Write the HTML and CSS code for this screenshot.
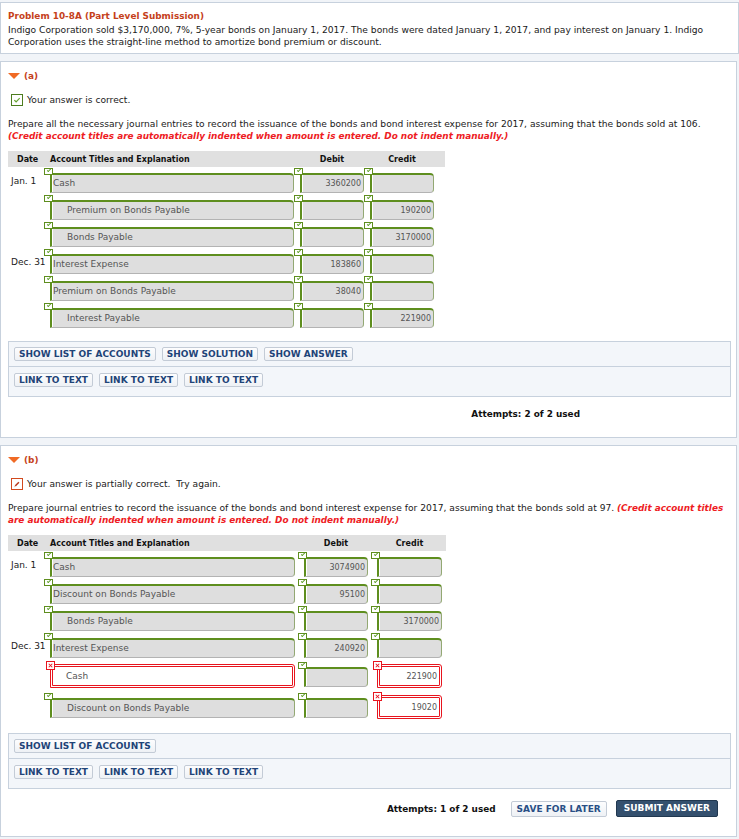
FILE: index.html
```html
<!DOCTYPE html>
<html>
<head>
  <title>Problem 10-8A (Part Level Submission)</title>
  <link rel="stylesheet" href="styles.css">
</head>
<body>
  <div class="intro">
    <div class="prob-title">Problem 10-8A (Part Level Submission)</div>
    <p>Indigo Corporation sold $3,170,000, 7%, 5-year bonds on January 1, 2017. The bonds were dated January 1, 2017, and pay interest on January 1. Indigo Corporation uses the straight-line method to amortize bond premium or discount.</p>
  </div>

  <!-- part (a) -->
  <div class="part">
    <div class="part-head"><span class="arrow"></span>(a)</div>
    <div class="status">
      <svg class="status-icon" width="12" height="12" viewBox="0 0 12 12"><rect x="0.5" y="0.5" width="11" height="11" fill="#fff" stroke="#4d7d1f"/><path d="M3.3 6.1 L5.1 7.8 L8.7 4.2" fill="none" stroke="#64a22e" stroke-width="1.2"/></svg>
      Your answer is correct.
    </div>
    <p class="q">Prepare all the necessary journal entries to record the issuance of the bonds and bond interest expense for 2017, assuming that the bonds sold at 106. <span class="warn">(Credit account titles are automatically indented when amount is entered. Do not indent manually.)</span></p>

    <div class="journal">
      <div class="jhead">
        <div class="c-date">Date</div>
        <div class="c-acct">Account Titles and Explanation</div>
        <div class="c-amt">Debit</div>
        <div class="c-amt">Credit</div>
      </div>
      <div class="jrow">
        <div class="c-date">Jan. 1</div>
        <div class="cell c-acct"><i class="mark"></i><div class="fld">Cash</div></div>
        <div class="cell c-amt"><i class="mark"></i><div class="fld num">3360200</div></div>
        <div class="cell c-amt"><i class="mark"></i><div class="fld num"></div></div>
      </div>
      <div class="jrow">
        <div class="c-date"></div>
        <div class="cell c-acct"><i class="mark"></i><div class="fld ind">Premium on Bonds Payable</div></div>
        <div class="cell c-amt"><i class="mark"></i><div class="fld num"></div></div>
        <div class="cell c-amt"><i class="mark"></i><div class="fld num">190200</div></div>
      </div>
      <div class="jrow">
        <div class="c-date"></div>
        <div class="cell c-acct"><i class="mark"></i><div class="fld ind">Bonds Payable</div></div>
        <div class="cell c-amt"><i class="mark"></i><div class="fld num"></div></div>
        <div class="cell c-amt"><i class="mark"></i><div class="fld num">3170000</div></div>
      </div>
      <div class="jrow">
        <div class="c-date">Dec. 31</div>
        <div class="cell c-acct"><i class="mark"></i><div class="fld">Interest Expense</div></div>
        <div class="cell c-amt"><i class="mark"></i><div class="fld num">183860</div></div>
        <div class="cell c-amt"><i class="mark"></i><div class="fld num"></div></div>
      </div>
      <div class="jrow">
        <div class="c-date"></div>
        <div class="cell c-acct"><i class="mark"></i><div class="fld">Premium on Bonds Payable</div></div>
        <div class="cell c-amt"><i class="mark"></i><div class="fld num">38040</div></div>
        <div class="cell c-amt"><i class="mark"></i><div class="fld num"></div></div>
      </div>
      <div class="jrow">
        <div class="c-date"></div>
        <div class="cell c-acct"><i class="mark"></i><div class="fld ind">Interest Payable</div></div>
        <div class="cell c-amt"><i class="mark"></i><div class="fld num"></div></div>
        <div class="cell c-amt"><i class="mark"></i><div class="fld num">221900</div></div>
      </div>
    </div>

    <div class="tools">
      <div class="tools-row">
        <button class="btn">Show List of Accounts</button>
        <button class="btn">Show Solution</button>
        <button class="btn">Show Answer</button>
      </div>
      <div class="tools-row links">
        <button class="btn">Link to Text</button>
        <button class="btn">Link to Text</button>
        <button class="btn">Link to Text</button>
      </div>
    </div>

    <div class="foot foot-done">
      <span class="attempts">Attempts: 2 of 2 used</span>
    </div>
  </div>

  <!-- part (b) -->
  <div class="part part-last">
    <div class="part-head"><span class="arrow"></span>(b)</div>
    <div class="status">
      <svg class="status-icon" width="12" height="12" viewBox="0 0 12 12"><rect x="0.5" y="0.5" width="11" height="11" fill="#fff" stroke="#d24a1e"/><path d="M4.2 8 L7.9 4.2" fill="none" stroke="#b8361a" stroke-width="1.5"/><path d="M3.4 8.7 L4.2 8" stroke="#e9a088" stroke-width="1"/></svg>
      Your answer is partially correct.&nbsp; Try again.
    </div>
    <p class="q">Prepare journal entries to record the issuance of the bonds and bond interest expense for 2017, assuming that the bonds sold at 97. <span class="warn">(Credit account titles are automatically indented when amount is entered. Do not indent manually.)</span></p>

    <div class="journal wide">
      <div class="jhead">
        <div class="c-date">Date</div>
        <div class="c-acct">Account Titles and Explanation</div>
        <div class="c-amt">Debit</div>
        <div class="c-amt">Credit</div>
      </div>
      <div class="jrow">
        <div class="c-date">Jan. 1</div>
        <div class="cell c-acct"><i class="mark"></i><div class="fld">Cash</div></div>
        <div class="cell c-amt"><i class="mark"></i><div class="fld num">3074900</div></div>
        <div class="cell c-amt"><i class="mark"></i><div class="fld num"></div></div>
      </div>
      <div class="jrow">
        <div class="c-date"></div>
        <div class="cell c-acct"><i class="mark"></i><div class="fld">Discount on Bonds Payable</div></div>
        <div class="cell c-amt"><i class="mark"></i><div class="fld num">95100</div></div>
        <div class="cell c-amt"><i class="mark"></i><div class="fld num"></div></div>
      </div>
      <div class="jrow">
        <div class="c-date"></div>
        <div class="cell c-acct"><i class="mark"></i><div class="fld ind">Bonds Payable</div></div>
        <div class="cell c-amt"><i class="mark"></i><div class="fld num"></div></div>
        <div class="cell c-amt"><i class="mark"></i><div class="fld num">3170000</div></div>
      </div>
      <div class="jrow">
        <div class="c-date">Dec. 31</div>
        <div class="cell c-acct"><i class="mark"></i><div class="fld">Interest Expense</div></div>
        <div class="cell c-amt"><i class="mark"></i><div class="fld num">240920</div></div>
        <div class="cell c-amt"><i class="mark"></i><div class="fld num"></div></div>
      </div>
      <div class="jrow has-err">
        <div class="c-date"></div>
        <div class="cell bad c-acct"><i class="mark"></i><div class="fld ind">Cash</div></div>
        <div class="cell c-amt"><i class="mark"></i><div class="fld num"></div></div>
        <div class="cell bad c-amt"><i class="mark"></i><div class="fld num">221900</div></div>
      </div>
      <div class="jrow has-err">
        <div class="c-date"></div>
        <div class="cell c-acct"><i class="mark"></i><div class="fld ind">Discount on Bonds Payable</div></div>
        <div class="cell c-amt"><i class="mark"></i><div class="fld num"></div></div>
        <div class="cell bad c-amt"><i class="mark"></i><div class="fld num">19020</div></div>
      </div>
    </div>

    <div class="tools">
      <div class="tools-row">
        <button class="btn">Show List of Accounts</button>
      </div>
      <div class="tools-row links">
        <button class="btn">Link to Text</button>
        <button class="btn">Link to Text</button>
        <button class="btn">Link to Text</button>
      </div>
    </div>

    <div class="foot">
      <span class="attempts">Attempts: 1 of 2 used</span>
      <button class="btn save">Save for Later</button>
      <button class="btn submit">Submit Answer</button>
    </div>
  </div>
</body>
</html>
```

FILE: styles.css
```css
body { margin: 0; background: #f1f4f8; font-family: "DejaVu Sans", Verdana, sans-serif; font-size: 9.15px; line-height: 12px; color: #1a1a1a; }
p { margin: 0; }

.intro { margin-top: 2px; background: #fff; border: 1px solid #c7d1dd; padding: 7px 8px 5px 7px; }
.prob-title { font-size: 8.9px; font-weight: bold; color: #c5411b; margin-bottom: 2px; }

.part { width: 737px; box-sizing: border-box; margin-top: 7px; background: #fff; border: 1px solid #c7d1dd; padding: 8px 5px 17px 7px; }
.part-last { padding-bottom: 19px; }
.part-head { display: flex; align-items: center; gap: 4px; font-size: 8.9px; font-weight: bold; color: #c5411b; }
.arrow { width: 0; height: 0; border-left: 6px solid transparent; border-right: 6px solid transparent; border-top: 6px solid #f06a25; }

.status { display: flex; align-items: center; height: 12px; margin-top: 12px; }
.status-icon { margin: 0 4px 0 3px; flex: none; }
.q { margin-top: 12px; }
.warn { font-size: 8.9px; color: #ee1c24; font-weight: bold; font-style: italic; }

/* journal entry grid */
.journal { width: 437px; margin-top: 9px; font-size: 9px; }
.journal.wide { width: 438px; }
.jhead { display: flex; height: 16px; line-height: 16px; background: #e0e0e0; font-family: "DejaVu Sans Condensed", "DejaVu Sans", sans-serif; font-size: 8.9px; font-weight: bold; color: #111; }
.jrow { display: flex; align-items: center; padding: 1px 0; }
.jrow.has-err { padding: 2px 0; }

.c-date { width: 42px; flex: none; box-sizing: border-box; align-self: flex-start; padding: 7px 0 0 3px; }
.jhead .c-date { padding: 0 0 0 9px; }
.c-acct { width: 244px; flex: none; }
.c-amt { width: 64px; flex: none; margin-left: 6px; }
.jhead .c-amt { text-align: center; }
.wide .c-acct { width: 245px; }
.wide .c-amt { margin-left: 9px; }
.wide .c-amt:last-child { width: 65px; }

.cell { position: relative; padding-top: 5px; }
.fld { box-sizing: content-box; height: 17px; line-height: 17px; padding: 0 2px 0 1px; border-top: 2px solid #5e8e1e; border-left: 2px solid #5e8e1e; border-right: 1px solid #93a873; border-bottom: 1px solid #b3b3b3; border-radius: 0 4px 4px 0; background: #dedede; box-shadow: inset 1px 0 0 #fff; color: #555; white-space: nowrap; overflow: hidden; }
.fld.ind { padding-left: 15px; }
.fld.num { text-align: right; font-family: "DejaVu Sans Condensed", "DejaVu Sans", sans-serif; font-size: 8.9px; }

.mark { position: absolute; top: 0; left: -6px; width: 7px; height: 5px; border: 1px solid #5e8e1e; background: #fff; z-index: 1; }
.mark::after { content: ""; position: absolute; left: 2px; top: 0; width: 3px; height: 1px; border-left: 1px solid #5f9f2a; border-bottom: 1px solid #5f9f2a; transform: rotate(-45deg); }

.cell.bad { padding-top: 3px; }
.cell.bad .fld { height: 18px; line-height: 18px; border: 3px double #e8141e; border-radius: 0 3px 3px 0; background: #fff; box-shadow: none; }
.cell.bad .fld.ind { padding-left: 13px; }
.cell.bad .mark { left: -4px; height: 7px; border-color: #e8141e; }
.cell.bad .mark::before,
.cell.bad .mark::after { content: ""; position: absolute; left: 1px; top: 3px; width: 5px; height: 1px; border: 0; background: #e8141e; transform: rotate(45deg); }
.cell.bad .mark::after { transform: rotate(-45deg); }

/* buttons */
.tools { margin-top: 12px; border: 1px solid #c7d1dd; background: #f3f6fa; }
.tools-row { display: flex; gap: 6px; padding: 5px 5px; }
.tools-row.links { border-top: 1px solid #c7d1dd; padding: 6px 5px 9px; }
.btn { font-family: "DejaVu Sans", Verdana, sans-serif; font-size: 9px; font-weight: bold; line-height: 12px; text-transform: uppercase; color: #1f4478; background: linear-gradient(#fdfdfe, #eef1f5); border: 1px solid #c3cbd6; border-radius: 2px; padding: 0 4px; margin: 0; cursor: pointer; }

.foot { display: flex; justify-content: flex-end; align-items: center; margin-top: 11px; padding-right: 13px; }
.foot-done { padding-right: 151px; }
.attempts { font-size: 8.9px; font-weight: bold; color: #111; }
.btn.save { margin-left: 15px; padding: 0 5px; line-height: 14px; color: #2a4f86; }
.btn.submit { margin-left: 9px; line-height: 15px; color: #fff; background: #34506e; border-color: #213850; padding: 0 7px; }
```
